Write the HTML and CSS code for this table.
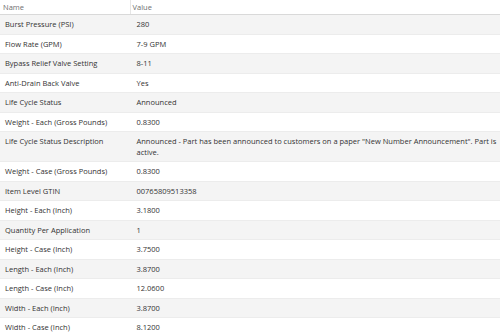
FILE: index.html
```html
<!DOCTYPE html>
<html>
<head>
<meta charset="utf-8">
<link rel="stylesheet" href="styles.css">
</head>
<body>
<table class="spec">
  <thead>
    <tr><th class="h-name">Name</th><th class="h-value">Value</th></tr>
  </thead>
  <tbody>
    <tr><td class="c-name">Burst Pressure (PSI)</td><td class="c-value">280</td></tr>
    <tr><td class="c-name">Flow Rate (GPM)</td><td class="c-value">7-9 GPM</td></tr>
    <tr><td class="c-name">Bypass Relief Valve Setting</td><td class="c-value">8-11</td></tr>
    <tr><td class="c-name">Anti-Drain Back Valve</td><td class="c-value">Yes</td></tr>
    <tr><td class="c-name">Life Cycle Status</td><td class="c-value">Announced</td></tr>
    <tr><td class="c-name">Weight - Each (Gross Pounds)</td><td class="c-value">0.8300</td></tr>
    <tr><td class="c-name">Life Cycle Status Description</td><td class="c-value">Announced - Part has been announced to customers on a paper "New Number Announcement". Part is active.</td></tr>
    <tr><td class="c-name">Weight - Case (Gross Pounds)</td><td class="c-value">0.8300</td></tr>
    <tr><td class="c-name">Item Level GTIN</td><td class="c-value">00765809513358</td></tr>
    <tr><td class="c-name">Height - Each (Inch)</td><td class="c-value">3.1800</td></tr>
    <tr><td class="c-name">Quantity Per Application</td><td class="c-value">1</td></tr>
    <tr><td class="c-name">Height - Case (Inch)</td><td class="c-value">3.7500</td></tr>
    <tr><td class="c-name">Length - Each (Inch)</td><td class="c-value">3.8700</td></tr>
    <tr><td class="c-name">Length - Case (Inch)</td><td class="c-value">12.0600</td></tr>
    <tr><td class="c-name">Width - Each (Inch)</td><td class="c-value">3.8700</td></tr>
    <tr><td class="c-name">Width - Case (Inch)</td><td class="c-value">8.1200</td></tr>
  </tbody>
</table>
</body>
</html>
```
FILE: styles.css
```css
html, body {
  margin: 0;
  padding: 0;
  background: #ffffff;
}
body {
  font-family: "Open Sans", "Liberation Sans", sans-serif;
  font-size: 7.5px;
  color: #333333;
}
.spec {
  width: 500px;
  border-collapse: collapse;
  table-layout: fixed;
}
.spec th {
  box-sizing: border-box;
  font-weight: normal;
  text-align: left;
  color: #6f6f6f;
  height: 14px;
  line-height: 14px;
  padding: 0;
  border-bottom: 1px solid #d9d9d9;
  vertical-align: middle;
}
.h-name {
  width: 130px;
  padding-left: 3px !important;
}
.h-value {
  border-left: 1px solid #e6e6e6;
  padding-left: 2px !important;
}
.spec td {
  line-height: 10.5px;
  padding: 4px 2px 4px 6.5px;
  border-bottom: 1px solid #ececec;
  vertical-align: top;
}
.spec td.c-name {
  padding-left: 5px;
}
.spec tbody tr:nth-child(odd) td {
  background: #f4f4f4;
}
```
